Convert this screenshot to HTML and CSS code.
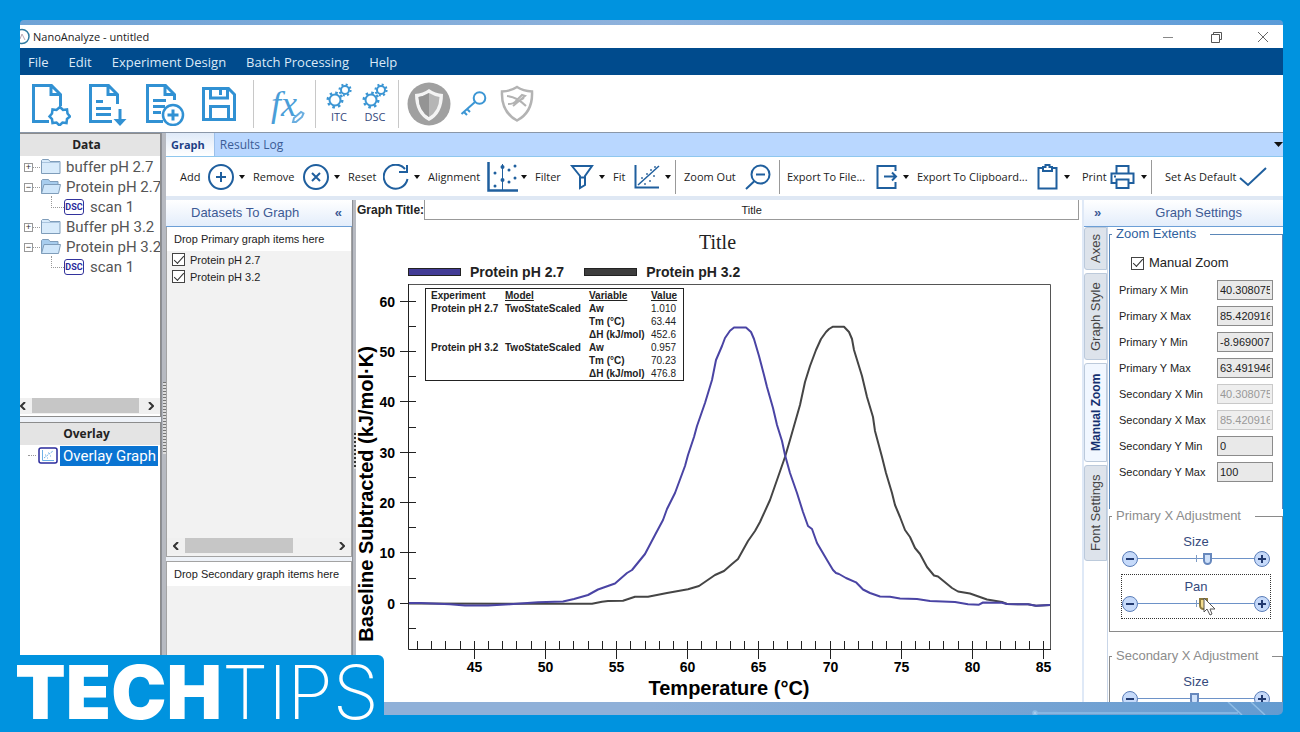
FILE: index.html
```html
<!DOCTYPE html>
<html lang="en">
<head>
<meta charset="utf-8">
<title>NanoAnalyze - untitled</title>
<link rel="stylesheet" href="styles.css">
</head>
<body>
<svg class="defs" aria-hidden="true">
  <symbol id="folder" viewBox="0 0 20 16"><path d="M.5 14.500V1.500l1-1h6l1.500 2h10v12z" fill="#d8ebfb" stroke="#7f9dba"/><path d="M1 3.500h18" stroke="#a9c4de"/></symbol>
  <symbol id="folder-open" viewBox="0 0 20 16"><path d="M.5 14.500V1.500l1-1h6l1.500 2h8v3" fill="#a8cdee" stroke="#7f9dba"/><path d="M.5 14.500L3 5.500h16.500l-2 9z" fill="#cfe6fa" stroke="#7f9dba"/></symbol>
  <symbol id="gears" viewBox="0 0 26 26"><g fill="none" stroke="#3c96d4"><circle cx="9" cy="17" r="5.500" stroke-width="2"/><circle cx="9" cy="17" r="7.300" stroke-width="2.400" stroke-dasharray="2.600 3.133"/><circle cx="19" cy="7" r="4" stroke-width="2"/><circle cx="19" cy="7" r="5.500" stroke-width="2.200" stroke-dasharray="2 2.320"/></g></symbol>
  <symbol id="caret" viewBox="0 0 6 4"><path d="M0 0h6L3 4z" fill="#111"/></symbol>
</svg>
<div class="window">
  <div class="wallpaper"></div>
  <header class="titlebar">
    <svg class="app-icon" width="10" height="17" viewBox="0 0 10 17"><circle cx="2" cy="8.500" r="7" fill="#fff" stroke="#2f7aa0" stroke-width="1.500"/><path d="M0 11l2-5 3 6" fill="none" stroke="#b9a9b5"/></svg>
    <h1 class="title">NanoAnalyze - untitled</h1>
    <button class="win-btn" aria-label="Minimize"><svg width="12" height="12"><path d="M1 6.500h10" stroke="#888"/></svg></button>
    <button class="win-btn" aria-label="Restore"><svg width="12" height="12" fill="none" stroke="#555"><path d="M.5 3.500h8v8h-8zM2.500 3V1.500h8v7H9"/></svg></button>
    <button class="win-btn" aria-label="Close"><svg width="12" height="12"><path d="M1 1l10 10M11 1L1 11" stroke="#666"/></svg></button>
  </header>
  <nav class="menu">
    <button>File</button><button>Edit</button><button>Experiment Design</button><button>Batch Processing</button><button>Help</button>
  </nav>
  <div class="toolbar">
    <button aria-label="New"><svg width="40" height="44" viewBox="0 0 40 44" fill="none" stroke="#3191d3" stroke-width="3"><path d="M18 39.500H2.500v-36h18l9 9V24M20 3v9.500h9"/><path d="M29 25l3 3 4-.500.500 4 2.500 3-3 2.500-.500 4-4-.500-3 3-3-3-4 .500-.500-4-2.500-2.500 2.500-3 .500-4 4 .500z" stroke-width="2.500"/></svg></button>
    <button aria-label="Import"><svg width="40" height="44" viewBox="0 0 40 44" fill="none" stroke="#3191d3" stroke-width="3"><path d="M24 39.500H2.500v-36h18l9 9V22M20 3v9.500h9M8 19.500h7M8 26.500h15M8 32.500h15"/><path d="M32 27v12"/><path d="M25.500 37h13L32 44z" fill="#3191d3" stroke="none"/></svg></button>
    <button aria-label="Add file"><svg width="40" height="44" viewBox="0 0 40 44" fill="none" stroke="#3191d3" stroke-width="3"><path d="M18 39.500H2.500v-36h18l9 9V18M20 3v9.500h9M8 18.500h13M8 24.500h12M8 30.500h8"/><circle cx="28" cy="33" r="10" stroke-width="2.500"/><path d="M22.500 33h11M28 27.500v11"/></svg></button>
    <button aria-label="Save"><svg width="34" height="44" viewBox="0 0 34 44" fill="none" stroke="#3191d3" stroke-width="3"><path d="M1.500 6.500h25l6 6v25h-31z"/><path d="M8.500 7v9h17V7M18.500 7v6M8.500 37V24.500h18V37" /></svg></button>
    <hr>
    <button aria-label="Formula" class="formula"><span class="fx">fx</span><svg width="14" height="14" viewBox="0 0 14 14" fill="#fff" stroke="#6aaee0" stroke-width="2"><path d="M2 12l1-4 7-6 2.500 1.500L11 7l-6 5z"/></svg></button>
    <hr>
    <button class="gear"><svg width="26" height="26"><use href="#gears"/></svg>ITC</button>
    <button class="gear"><svg width="26" height="26"><use href="#gears"/></svg>DSC</button>
    <hr>
    <button aria-label="Security"><svg width="44" height="44" viewBox="0 0 44 44"><circle cx="22" cy="22" r="21.500" fill="#a0a0a0"/><path d="M22 7q6 4.500 14 5 0 20-14 27Q8 32 8 12q8-.500 14-5z" fill="#f4f4f4"/><path d="M22 11q5 3 10.500 4-.500 14-10.500 20Q12 29 11.500 15 17 14 22 11z" fill="#b5b5b5"/><path d="M22 11v24Q12 29 11.500 15 17 14 22 11z" fill="#949494"/></svg></button>
    <button aria-label="Key"><svg width="28" height="28" viewBox="0 0 28 28" fill="none" stroke="#3c96d4" stroke-width="2"><circle cx="19.500" cy="8" r="5.800"/><path d="M15 12L1.500 24M7 19l3 3M3.500 21.500L7 25"/></svg></button>
    <button aria-label="Signing disabled"><svg width="36" height="38" viewBox="0 0 36 38" fill="none" stroke="#b3b3b3" stroke-width="2.500"><path d="M18 2q6 4 15 4.500Q34 27 18 35.500 2 27 3 6.500 12 6 18 2z"/><path d="M8 11q10 1 19 10M9 19q6 0 8-3l6-6 3 1-6 5-6 5M20 16l5-3" stroke-width="2"/></svg></button>
  </div>
  <main class="main">
    <aside class="sidebar">
      <section class="panel data">
        <h2 class="panel-head">Data</h2>
        <ul class="tree">
          <li><button class="twist" aria-label="Expand">+</button><svg class="folder"><use href="#folder"/></svg>buffer pH 2.7</li>
          <li><button class="twist" aria-label="Collapse">−</button><svg class="folder"><use href="#folder-open"/></svg>Protein pH 2.7</li>
          <li class="child"><span class="chip">DSC</span>scan 1</li>
          <li><button class="twist" aria-label="Expand">+</button><svg class="folder"><use href="#folder"/></svg>Buffer pH 3.2</li>
          <li><button class="twist" aria-label="Collapse">−</button><svg class="folder"><use href="#folder-open"/></svg>Protein pH 3.2</li>
          <li class="child"><span class="chip">DSC</span>scan 1</li>
        </ul>
        <div class="hscroll"><svg width="6" height="8"><path d="M5 0L1 4l4 4"/></svg><span class="bar"></span><svg width="6" height="8"><path d="M1 0l4 4-4 4"/></svg></div>
      </section>
      <section class="panel overlay">
        <h2 class="panel-head">Overlay</h2>
        <div class="overlay-item"><svg width="20" height="17" viewBox="0 0 20 17"><rect x="1" y="1" width="18" height="15" rx="2" fill="#fff" stroke="#2a2a9c" stroke-width="1.500"/><path d="M4.500 3v10.500H16" fill="none" stroke="#6db0e6"/><path d="M6 11l9-7M7 8h1M10 6h1M12 9h1M9 11h1" stroke="#6db0e6" stroke-dasharray="2 1"/></svg><span class="selected">Overlay Graph</span></div>
      </section>
    </aside>
    <div class="splitter"><i></i></div>
    <div class="work">
      <div class="tabs">
        <button class="tab on">Graph</button><button class="tab">Results Log</button>
        <button class="tab-list" aria-label="Tab list"><svg width="9" height="6"><path d="M0 0h9L4.500 5z" fill="#111"/></svg></button>
      </div>
      <div class="strip">
        <button>Add<svg class="ico" width="26" height="26" fill="none" stroke="#1f5f9e" stroke-width="2"><circle cx="13" cy="13" r="12"/><path d="M8 13h10M13 8v10"/></svg><svg class="caret"><use href="#caret"/></svg></button>
        <button>Remove<svg class="ico" width="26" height="26" fill="none" stroke="#1f5f9e" stroke-width="2"><circle cx="13" cy="13" r="12"/><path d="M9 9l8 8M17 9l-8 8"/></svg><svg class="caret"><use href="#caret"/></svg></button>
        <button>Reset<svg class="ico" width="26" height="26" fill="none" stroke="#1f5f9e" stroke-width="2"><path d="M24.500 15A12 12 0 1 1 22 5M24 1v7h-8"/></svg><svg class="caret"><use href="#caret"/></svg></button>
        <button>Alignment<svg class="ico" width="32" height="30" fill="none" stroke="#1f5f9e"><path d="M1.500 0v28.500H31" stroke-width="2.500"/><path d="M15.500 2v26" stroke-width="1"/><g fill="#1f5f9e" stroke="none"><circle cx="8" cy="11" r="1.500"/><circle cx="8" cy="24" r="1.500"/><circle cx="15.500" cy="5" r="2"/><circle cx="15.500" cy="18" r="2"/><circle cx="22" cy="8" r="1.500"/><circle cx="22" cy="20" r="1.500"/><circle cx="28" cy="4" r="1.500"/><circle cx="28" cy="16" r="1.500"/></g></svg><svg class="caret tight"><use href="#caret"/></svg></button>
        <button>Filter<svg class="ico" width="24" height="26" fill="none" stroke="#1f5f9e" stroke-width="2"><path d="M2 2h20l-7 10v9l-5 3V12zM10 13.500h5"/></svg><svg class="caret"><use href="#caret"/></svg></button>
        <button class="snug">Fit<svg class="ico" width="26" height="26" fill="none" stroke="#1f5f9e" stroke-width="2"><path d="M1.500 1v22.500H25"/><path d="M4 21L25 2" stroke-width="1.500"/><path d="M7 14h2M12 10h2M16 6h2M20 3h2M10 20h2M15 17h2M19 12h2" stroke="#6f93b9"/></svg><svg class="caret"><use href="#caret"/></svg></button>
        <hr>
        <button>Zoom Out<svg class="ico" width="26" height="26" fill="none" stroke="#1f5f9e" stroke-width="2"><circle cx="15.500" cy="10.500" r="9"/><path d="M9.500 17L1 25M11 10.500h9"/></svg></button>
        <hr>
        <button>Export To File...<svg class="ico" width="22" height="26" fill="none" stroke="#1f5f9e" stroke-width="2"><path d="M19.500 7V2h-18v22h18v-6M8 12.500h12M16 8.500l4 4-4 4"/></svg><svg class="caret"><use href="#caret"/></svg></button>
        <button class="clip">Export To Clipboard...<svg class="ico" width="22" height="26" fill="none" stroke="#1f5f9e" stroke-width="2"><path d="M6 4H1.500v20.500h18V4H15M6 7V3h2.500V1h4v2H15v4z"/></svg><svg class="caret"><use href="#caret"/></svg></button>
        <button class="snug">Print<svg class="ico" width="26" height="26" fill="none" stroke="#1f5f9e" stroke-width="2"><path d="M6.500 9V2h12v7M6 19H1.500V9.500h22V19H19M6.500 15.500h12V24h-12z"/><path d="M4 12.500h2"/></svg><svg class="caret"><use href="#caret"/></svg></button>
        <hr>
        <button>Set As Default<svg class="ico" width="28" height="26" fill="none" stroke="#1f5f9e" stroke-width="2"><path d="M1 14l8 7L27 4"/></svg></button>
      </div>
      <div class="body">
        <section class="datasets">
          <h2 class="pane-head">Datasets To Graph<button aria-label="Collapse panel">«</button></h2>
          <div class="drop primary">
            <p class="drop-head">Drop Primary graph items here</p>
            <label class="check"><input type="checkbox" checked>Protein pH 2.7</label>
            <label class="check"><input type="checkbox" checked>Protein pH 3.2</label>
            <div class="hscroll"><svg width="6" height="8"><path d="M5 0L1 4l4 4"/></svg><span class="bar short"></span><svg width="6" height="8"><path d="M1 0l4 4-4 4"/></svg></div>
          </div>
          <div class="drop secondary"><p class="drop-head">Drop Secondary graph items here</p></div>
        </section>
        <div class="splitter slim"><i></i></div>
        <section class="graph">
          <div class="title-row"><label for="gt">Graph Title:</label><input id="gt" value="Title"></div>
          <h2 class="graph-title">Title</h2>
          <div class="legend"><i class="swatch blue"></i><span>Protein pH 2.7</span><i class="swatch dark"></i><span>Protein pH 3.2</span></div>
          <div class="plot">
            <svg class="chart" viewBox="356 282 726 420" preserveAspectRatio="xMinYMin meet" role="img" aria-label="Baseline subtracted heat capacity against temperature">
              <path d="M408 284.500H1050.500V650" class="frame soft"/>
              <path d="M408.500 284V649.500H1051" class="frame"/>
              <g id="ticks"></g>
              <polyline class="curve dark" points="409,603.500 565,603.700 592,603.700 602,601.700 608,601 623,600.700 635,596.700 648,596.700 667,593 688,589.300 699,586 715,575 724,571 732,564 738,559 748,541 755,531 760,522 770,500 777,480 785,457 790,440 800,405 805,382 810,366 816,350 821,339 826,332 829,329 833,326.700 844,326.700 849,332 852,339 854,350 862,376 867,397 873,417 875,431 882,457 886,473 892,493 895,505 900,517 905,530 910,537 915,548 920,554 927,567 934,575.500 938,576.500 952,588 958,591.500 970,593.500 987,599.500 1002,602 1007,604 1028,604.300 1036,605.700 1050,605"/>
              <polyline class="curve blue" points="409,603 421,603 450,604.300 465,605.500 488,605.500 510,604.300 538,602.300 563,601.500 574,599 588,595 598,589.500 615,583.500 627,573 632,570 645,554 655,535 663,520 667,509 675,493 685,466 688,455 694,437 697,426 705,403 712,380 716,360 722,346 725,338 730,330.700 734,327.500 746,327.500 751,332 754,339 759,356 764,375 767,387 773,408 777,425 782,441 785,455 790,473 797,493 803,512 808,526 812,529 817,543 827,560 833,570 836,573 839,574 846,578 856,582.300 863,589.500 870,593 880,596.500 890,596.700 900,598.500 917,599 930,601 955,602 968,604.300 979,604.700 983,602.500 1002,602.700 1007,604 1028,604.300 1036,605.700 1050,605"/>
              <text class="axis-name" x="729" y="695" text-anchor="middle">Temperature (°C)</text>
              <text class="axis-name" transform="translate(373 494) rotate(-90)" text-anchor="middle">Baseline Subtracted (kJ/mol·K)</text>
            </svg>
            <table class="fit">
              <thead><tr><th>Experiment</th><th><u>Model</u></th><th><u>Variable</u></th><th><u>Value</u></th></tr></thead>
              <tbody>
                <tr><th>Protein pH 2.7</th><th>TwoStateScaled</th><th>Aw</th><td>1.010</td></tr>
                <tr><th></th><th></th><th>Tm (°C)</th><td>63.44</td></tr>
                <tr><th></th><th></th><th>ΔH (kJ/mol)</th><td>452.6</td></tr>
                <tr><th>Protein pH 3.2</th><th>TwoStateScaled</th><th>Aw</th><td>0.957</td></tr>
                <tr><th></th><th></th><th>Tm (°C)</th><td>70.23</td></tr>
                <tr><th></th><th></th><th>ΔH (kJ/mol)</th><td>476.8</td></tr>
              </tbody>
            </table>
          </div>
        </section>
        <section class="settings">
          <h2 class="pane-head right"><button aria-label="Collapse settings">»</button>Graph Settings</h2>
          <div class="settings-body">
            <div class="vtabs"><button class="h-axes">Axes</button><button class="h-style">Graph Style</button><button class="h-zoom on">Manual Zoom</button><button class="h-font">Font Settings</button></div>
            <div class="groups">
              <fieldset class="extents">
                <legend>Zoom Extents</legend>
                <label class="check big"><input type="checkbox" checked>Manual Zoom</label>
                <label class="field">Primary X Min<input value="40.308075"></label>
                <label class="field">Primary X Max<input value="85.420916"></label>
                <label class="field">Primary Y Min<input value="-8.969007"></label>
                <label class="field">Primary Y Max<input value="63.491946"></label>
                <label class="field">Secondary X Min<input value="40.308075" disabled></label>
                <label class="field">Secondary X Max<input value="85.420916" disabled></label>
                <label class="field">Secondary Y Min<input value="0"></label>
                <label class="field">Secondary Y Max<input value="100"></label>
              </fieldset>
              <fieldset class="adjust first">
                <legend>Primary X Adjustment</legend>
                <div class="slider"><label for="s1">Size</label><div class="track"><button aria-label="Decrease size"><svg width="14" height="14"><path d="M3 7h8"/></svg></button><input id="s1" type="range" value="61"><button aria-label="Increase size"><svg width="14" height="14"><path d="M3 7h8M7 3v8"/></svg></button></div></div>
                <div class="slider focus"><label for="s2">Pan</label><div class="track"><button aria-label="Pan left"><svg width="14" height="14"><path d="M3 7h8"/></svg></button><input id="s2" type="range" value="57"><button aria-label="Pan right"><svg width="14" height="14"><path d="M3 7h8M7 3v8"/></svg></button></div>
                  <svg class="cursor" width="13" height="19" viewBox="0 0 13 19"><path d="M1 1v14l3-3 3 6 2-1-2-5h5z" fill="#fff" stroke="#555"/></svg></div>
              </fieldset>
              <fieldset class="adjust">
                <legend>Secondary X Adjustment</legend>
                <div class="slider"><label for="s3">Size</label><div class="track"><button aria-label="Decrease secondary size"><svg width="14" height="14"><path d="M3 7h8"/></svg></button><input id="s3" type="range" value="49"><button aria-label="Increase secondary size"><svg width="14" height="14"><path d="M3 7h8M7 3v8"/></svg></button></div></div>
              </fieldset>
            </div>
          </div>
        </section>
      </div>
    </div>
  </main>
  <div class="wallpaper bottom"><svg width="260" height="13" fill="none" stroke="#8fbde6" stroke-width="1.500"><path d="M12 11H215M205 0l14 13M228 0l14 13"/><circle cx="12" cy="11" r="2" fill="#a9cbee"/></svg></div>
</div>
<div class="brand"><b>TECH</b><span>TIPS</span></div>
<script src="chart.js"></script>
</body>
</html>
```
FILE: chart.js
```js
// Draws the axis ticks and their labels for the plotted range.
const range = { x0: 40.308075, x1: 85.420916, y0: -8.969007, y1: 63.491946 };
const box = { left: 408, right: 1050, top: 284, bottom: 649 };
const ns = "http://www.w3.org/2000/svg";
const layer = document.getElementById("ticks");
const px = t => Math.round(box.left + (t - range.x0) / (range.x1 - range.x0) * (box.right - box.left)) - 0.5;
const py = v => Math.round(box.bottom - (v - range.y0) / (range.y1 - range.y0) * (box.bottom - box.top)) - 0.5;

function line(d) {
  const p = document.createElementNS(ns, "path");
  p.setAttribute("d", d);
  p.setAttribute("class", "tick");
  layer.append(p);
}
function label(x, y, value, anchor) {
  const t = document.createElementNS(ns, "text");
  t.setAttribute("x", x);
  t.setAttribute("y", y);
  t.setAttribute("text-anchor", anchor);
  t.setAttribute("class", "tick-label");
  t.textContent = value;
  layer.append(t);
}
for (let t = 41; t <= 85; t++) {
  const major = t % 5 === 0;
  line(`M${px(t)} 641V${major ? 659 : 650}`);
  if (major) label(px(t), 672, t, "middle");
}
for (let v = -5; v <= 60; v += 5) {
  const major = v % 10 === 0;
  line(`M${major ? 400 : 408} ${py(v)}H416`);
  if (major) label(395, py(v) + 5, v, "end");
}
```
FILE: styles.css
```css
* { box-sizing: border-box; }
body { margin: 0; background: #0093df; font-family: "Open Sans", "Noto Sans", sans-serif; font-size: 11px; color: #222; }
button { border: 0; padding: 0; margin: 0; background: none; font: inherit; color: inherit; }
input { font: inherit; color: inherit; margin: 0; }
h1, h2, p, ul { margin: 0; padding: 0; font-weight: normal; }
hr { margin: 0; border: 0; width: 1px; background: #c8c8c8; }
svg { flex: none; display: block; }
.defs { display: none; }

.window { display: flex; flex-direction: column; height: 100vh; padding: 20px 17px 17px 20px; }
.wallpaper { flex: none; height: 5px; border-radius: 4px 4px 0 0; background: linear-gradient(90deg, #6fa3d6, #8fb2dc 50%, #5b9bd8); }
.wallpaper.bottom { height: 13px; border-radius: 0 0 5px 0; display: flex; justify-content: flex-end; background: linear-gradient(90deg, #8fb0d8 50%, #649bd0); }

.titlebar { display: flex; flex: none; align-items: center; gap: 3px; height: 23px; background: #fff; }
.title { flex: 1; font-size: 11px; }
.win-btn { width: 46px; display: flex; justify-content: center; }
.win-btn:last-child { width: 40px; }

.menu { display: flex; flex: none; align-items: center; gap: 20px; height: 27px; padding-left: 8px; background: #004b8d; color: #dbe9f7; font-size: 13px; }

.toolbar { display: flex; flex: none; align-items: center; gap: 17px; height: 58px; padding-left: 11px; background: #fff; border-bottom: 1px solid #8a97a8; color: #34497c; }
.toolbar hr { height: 48px; }
.formula { display: flex; align-items: flex-end; width: 38px; }
.fx { font: italic 36px/40px "Liberation Serif", serif; color: #4a9ed8; }
.formula svg { margin-left: -6px; }
.gear { display: flex; flex-direction: column; align-items: center; font-size: 11px; line-height: 16px; width: 26px; }
.toolbar hr + .gear, .toolbar .gear + hr { margin-left: -7px; }
.toolbar .formula + hr { margin-left: -11px; }
.toolbar .gear + .gear { margin-left: -7px; }
.gear + hr + button { margin-left: -9px; }
.gear + hr + button + button { margin-left: -8px; }
.gear + hr + button + button + button { margin-left: -6px; }

.main { display: flex; flex: 1; min-height: 0; background: #eef2f8; }
.sidebar { display: flex; flex-direction: column; gap: 5px; width: 141px; flex: none; }
.panel { display: flex; flex-direction: column; min-height: 0; background: #fff; border: 1px solid #8c8c8c; border-left: 0; overflow: hidden; }
.data { flex: 284 1 0; }
.overlay { flex: 280 1 0; }
.panel-head { flex: none; height: 22px; background: #e4e4e4; font-size: 12px; line-height: 22px; font-weight: bold; text-align: center; padding-right: 7px; }
.tree { flex: 1; list-style: none; font: 15px/20px Roboto, "Liberation Sans", sans-serif; color: #555; padding: 1px 0 0 4px; white-space: nowrap; }
.tree li { display: flex; align-items: center; height: 20px; }
.twist { flex: none; width: 9px; height: 9px; border: 1px solid #999; font: 9px/7px "Liberation Sans", sans-serif; color: #333; margin-right: 8px; position: relative; }
.twist::after { content: ""; position: absolute; left: 8px; top: 3px; width: 7px; border-top: 1px dotted #999; }
.folder { width: 20px; height: 16px; margin-right: 5px; }
.child { padding-left: 27px; }
.child::before { content: ""; width: 12px; height: 11px; border: 1px dotted #999; border-width: 0 0 1px 1px; margin-bottom: 10px; }
.chip { width: 20px; height: 16px; margin-right: 6px; border: 1px solid #33339c; border-radius: 3px; font: bold 9px/14px Roboto, sans-serif; color: #2b2b9c; text-align: center; background: #fff; }
.hscroll { display: flex; flex: none; align-items: center; gap: 6px; height: 16px; padding: 0 6px 0 0; background: #f0f0f0; }
.hscroll path { fill: none; stroke: #333; stroke-width: 2; }
.bar { flex: 1; height: 15px; margin-right: 3px; background: #c6c6c6; }
.panel .hscroll { margin-bottom: 2px; }
.overlay-item { display: flex; align-items: center; gap: 2px; margin-top: 1px; padding-left: 8px; font: 15px/20px Roboto, "Liberation Sans", sans-serif; }
.overlay-item::before { content: ""; flex: none; width: 8px; border-top: 1px dotted #999; }
.selected { flex: 1; margin-right: 2px; padding-left: 3px; background: #0a74d2; color: #fff; white-space: nowrap; }

.splitter { display: flex; flex: none; align-items: center; justify-content: center; width: 5px; background: #b7bac1; border-left: 1px solid #8c8f96; }
.splitter i { width: 3px; height: 72px; background: repeating-linear-gradient(#777 0 1px, #ddd 1px 3px); }
.splitter.slim { width: 4px; }
.splitter.slim i { width: 2px; height: 36px; background: repeating-linear-gradient(#333 0 2px, #ddd 2px 4px); }

.work { display: flex; flex: 1; flex-direction: column; min-width: 0; }
.tabs { display: flex; flex: none; height: 24px; background: #b9d7ff; border-bottom: 1px solid #8fc7ee; color: #3b5c96; font-size: 12px; }
.tab { padding: 0 5px; }
.tab.on { background: linear-gradient(#dfeaf8, #fff); color: #1d3f86; font-size: 11px; font-weight: bold; padding: 0 9px 0 5px; border-right: 1px solid #9cc0ea; }
.tab-list { margin-left: auto; }
.strip { display: grid; flex: none; align-items: center; height: 43px; padding-left: 14px; grid-template-columns: 73px 95px 80px 107px 78px 62px 9px 95px 8px 130px 165px 69px 14px 1fr; background: #fff; border-bottom: 4px solid #dfe8f4; white-space: nowrap; }
.strip button { display: flex; align-items: center; padding-right: 8px; min-width: 0; }
.strip .clip { padding-right: 12px; }
.strip .snug { padding-right: 4px; }
.strip button:last-child { padding-right: 16px; }
.strip hr { height: 34px; background: #999; }
.ico { margin-left: auto; }
.caret { width: 6px; height: 4px; margin-left: 5px; }
.caret.tight { margin-left: 2px; }

.body { display: flex; flex: 1; min-height: 0; }
.datasets { display: flex; flex-direction: column; width: 186px; flex: none; }
.pane-head { display: flex; flex: none; align-items: center; justify-content: space-between; height: 27px; padding: 0 10px 0 25px; background: linear-gradient(#fff, #e3edfb); border-bottom: 1px solid #6c9fd6; color: #3d5a94; font: 13px/26px "Liberation Sans", Arial, sans-serif; }
.pane-head button { font-weight: bold; }
.pane-head.right { padding: 0 41px 0 10px; }
.drop { display: flex; flex-direction: column; min-height: 0; background: #f2f2f2; border: 1px solid #a3a3a3; border-top: 0; font: 12px/16px "Liberation Sans", Arial, sans-serif; }
.primary { flex: 330 1 0; margin-bottom: 4px; }
.secondary { flex: 141 1 0; border: 1px solid #a3a3a3; border-bottom: 0; }
.drop-head { height: 24px; padding-left: 7px; background: #fff; font-size: 11px; line-height: 24px; }
.check { display: flex; align-items: center; gap: 5px; height: 17px; padding-left: 5px; font-size: 11px; }
.check input { appearance: none; width: 13px; height: 13px; border: 1px solid #444; background: #fff; display: grid; place-items: center; }
.check input:checked::after { content: ""; width: 9px; height: 4px; border: 1px solid #333; border-width: 0 0 1px 1px; rotate: -48deg; margin-bottom: 3px; }
.drop .hscroll { margin: auto 0 2px; padding: 0 6px; }
.short { margin-right: 40px; }

.graph { display: flex; flex: 1; flex-direction: column; min-width: 0; background: #fff; font-family: "Liberation Sans", Arial, sans-serif; }
.title-row { display: flex; flex: none; height: 20px; padding: 0 3px 0 1px; }
.title-row label { font-size: 12px; line-height: 20px; font-weight: bold; white-space: nowrap; }
.title-row input { flex: 1; min-width: 0; text-align: center; font-size: 11px; border: 1px solid #999; border-top: 0; }
.graph-title { height: 43px; font: 20px/44px "Liberation Serif", serif; text-align: center; padding-right: 3px; }
.legend { display: flex; align-items: center; height: 18px; padding-left: 52px; font-size: 14px; font-weight: bold; }
.swatch { width: 53px; height: 8px; margin-right: 9px; border: 1px solid #222; }
.swatch.blue { background: #433c96; }
.swatch.dark { background: #3d3d3d; }
.legend span { margin-right: 20px; }
.plot { position: relative; flex: 1; min-height: 0; }
.chart { width: 100%; height: 100%; margin-top: 1px; font-family: "Liberation Sans", Arial, sans-serif; font-weight: bold; }
.frame { fill: none; stroke: #222; }
.soft { stroke: #555; }
.tick { stroke: #222; }
.tick-label { font-size: 14px; }
.axis-name { font-size: 20px; }
.curve { fill: none; stroke-width: 2; stroke-linejoin: round; }
.curve.blue { stroke: #4a44a4; }
.curve.dark { stroke: #454545; }
.fit { position: absolute; left: 69px; top: 7px; width: 259px; border: 1px solid #222; border-spacing: 0; background: #fff; font-size: 10px; line-height: 13px; table-layout: fixed; }
.fit th, .fit td { padding: 0; text-align: left; white-space: nowrap; height: 13px; }
.fit th:nth-child(1) { width: 79px; padding-left: 5px; }
.fit th:nth-child(2) { width: 84px; }
.fit th:nth-child(3) { width: 62px; }

.settings { display: flex; flex: none; flex-direction: column; width: 201px; overflow: hidden; background: #fff; border-left: 2px solid #dfe9f7; }
.settings-body { display: flex; flex: 1; min-height: 0; }
.vtabs { display: flex; flex: none; flex-direction: column; gap: 3px; width: 23px; font: 13px/22px "Liberation Sans", Arial, sans-serif; color: #444; }
.vtabs button { writing-mode: vertical-rl; rotate: 180deg; width: 23px; text-align: center; white-space: nowrap; background: #dde3eb; border: 1px solid #bccadb; border-radius: 0 3px 3px 0; }
.vtabs .on { background: #f1f7ff; color: #14306f; font-weight: bold; font-size: 12px; }
.vtabs .h-axes { height: 43px; }
.vtabs .h-style { height: 87px; }
.vtabs .h-zoom { height: 99px; }
.vtabs .h-font { height: 96px; }
.groups { flex: 1; min-width: 0; overflow: hidden; border-left: 1px solid #c9d6e8; padding-left: 1px; font: 12px/16px "Liberation Sans", Arial, sans-serif; }
fieldset { margin: 0; padding: 0; border: 1px solid #5b87b8; min-width: 0; }
legend { margin-left: 2px; padding: 0 14px 0 4px; font-size: 13px; line-height: 14px; }
.extents { height: 282px; border-bottom: 0; color: #222; }
.extents legend { color: #2f5f9e; }
.check.big { height: 28px; margin-top: 8px; padding-left: 21px; font-size: 13px; }
.field { display: flex; align-items: center; justify-content: space-between; height: 26px; padding: 0 9px 0 9px; font-size: 11px; white-space: nowrap; }
.field input { width: 56px; height: 20px; padding: 0 2px; background: #e9e9e9; border: 1px solid #8b8b8b; }
.field input:disabled { color: #999; border-color: #c9c9c9; background: #eee; }
.adjust { border-color: #8a8a8a; color: #34497c; }
.adjust.first { height: 123px; margin-bottom: 17px; }
.adjust legend { color: #8c8c8c; }
.slider { position: relative; height: 45px; margin: 0 11px; padding-top: 4px; border: 1px solid transparent; text-align: center; font-size: 13px; }
.adjust .slider:first-of-type { margin-top: 6px; }
.focus { border: 1px dotted #333; }
.slider label { display: block; }
.track { display: flex; align-items: center; height: 17px; }
.track button { flex: none; width: 16px; height: 16px; border: 1px solid #5a7db8; border-radius: 50%; background: #c6dafa; }
.track button path { stroke: #223a70; stroke-width: 2; }
.track input { appearance: none; flex: 1; min-width: 0; height: 14px; background: linear-gradient(#7f9cc4, #7f9cc4) 50% / 1px 7px no-repeat, linear-gradient(#6d92c8, #6d92c8) center / 100% 1px no-repeat; }
.track input::-webkit-slider-thumb { appearance: none; width: 9px; height: 12px; background: #cfe1fa; border: 2px solid #6788bd; border-radius: 0 0 5px 5px; }
.focus input::-webkit-slider-thumb { background: #f3dc8e; border-color: #8c7a3c; }
.cursor { position: absolute; left: 81px; top: 22px; }

.brand { position: absolute; left: 0; bottom: 0; width: 384px; height: 77px; padding-left: 15px; border-radius: 0 6px 0 0; background: #0093df; color: #fff; font: 74px/75px Inter, sans-serif; white-space: nowrap; }
.brand b { font-weight: 900; }
.brand span { font-weight: 200; }
```
